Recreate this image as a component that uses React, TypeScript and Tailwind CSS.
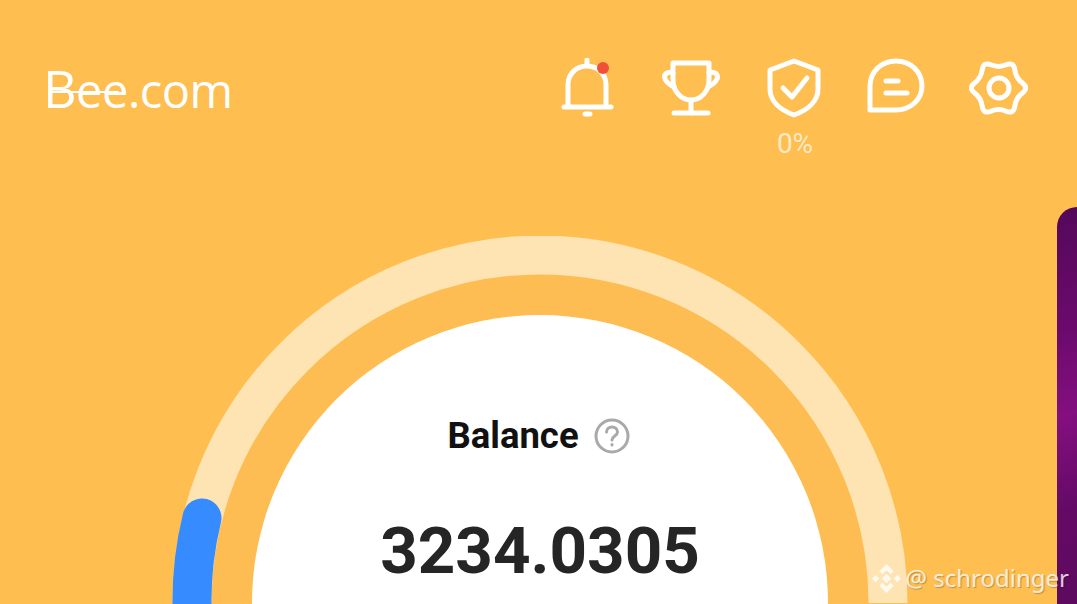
const HeaderIcon = ({ children }: { children: React.ReactNode }) => (
  <svg width="60" height="60" viewBox="0 0 60 60" fill="none" stroke="white" strokeWidth="5" strokeLinecap="round" strokeLinejoin="round">
    {children}
  </svg>
);

// six soft lobes, quadratic spline over alternating outer and inner points
const gearPath = () => {
  const pts = Array.from({ length: 12 }, (_, i) => {
    const r = i % 2 === 0 ? 30.5 : 20;
    const a = (i * Math.PI) / 6;
    return [29.5 + r * Math.cos(a), 30 + r * Math.sin(a)];
  });
  const mid = (a: number[], b: number[]) => `${(a[0] + b[0]) / 2} ${(a[1] + b[1]) / 2}`;
  let d = `M${mid(pts[11], pts[0])}`;
  pts.forEach((p, i) => {
    d += `Q${p[0]} ${p[1]} ${mid(p, pts[(i + 1) % 12])}`;
  });
  return d + 'Z';
};

const BinanceMark = () => (
  <svg width="29" height="29" viewBox="0 0 28 28" fill="currentColor">
    <path d="M14 0l7 7-3 3-4-4-4 4-3-3z" />
    <path d="M14 28l-7-7 3-3 4 4 4-4 3 3z" />
    <path d="M0 14l3.500-3.500L7 14l-3.500 3.500z" />
    <path d="M28 14l-3.500 3.500L21 14l3.500-3.500z" />
    <path d="M14 9.500l4.500 4.500-4.500 4.500L9.500 14z" />
  </svg>
);

export default function App() {
  return (
    <div className="relative flex h-[604px] w-full flex-col overflow-hidden bg-[#ffbe50] font-['Roboto',sans-serif]">
      {/* header */}
      <header className="flex h-[155px] shrink-0 items-start justify-between pl-[43px] pr-[48px] pt-[58px]">
        <div className="relative mt-[2px] font-['Open_Sans',sans-serif] text-[47px] font-normal leading-[56px] tracking-[-0.5px] text-white">
          <span className="text-[52px]">B</span>ee.com
          <span className="absolute left-[6px] top-[31px] h-[2px] w-[70px] bg-white" />
        </div>
        <div className="flex items-start gap-[43px]">
          <div className="relative">
            <HeaderIcon>
              <path d="M30 2v5" />
              <path d="M11 48V27c0-11 8-19 19-19s19 8 19 19v21" />
              <path d="M7 49h47" />
              <path d="M28 56h5" />
            </HeaderIcon>
            <span className="absolute left-[40px] top-[4px] h-[12px] w-[12px] rounded-full bg-[#f0503a]" />
          </div>
          <HeaderIcon>
            <path d="M13 5h36v17c0 11-8 20-18 20s-18-9-18-20z" />
            <path d="M13 15c-5-2-10 1-8 6 2 4 5 6 9 8" />
            <path d="M49 15c5-2 10 1 8 6-2 4-5 6-9 8" />
            <path d="M31 42v13" />
            <path d="M14 55h34" />
          </HeaderIcon>
          <div className="flex flex-col items-center">
            <HeaderIcon>
              <path d="M31 3l24 9v19c0 12-10 21-24 26C17 52 7 43 7 31V12z" />
              <path d="M20 30l9 9 15-19" />
            </HeaderIcon>
            <span className="ml-[4px] mt-[11px] text-[28px] leading-[30px] text-white/70">0%</span>
          </div>
          <HeaderIcon>
            <path d="M4 52V28C4 14 15 3 30 3s26 11 26 25-12 24-26 24z" />
            <path d="M20 23h12" />
            <path d="M20 35h21" />
          </HeaderIcon>
          <HeaderIcon>
            <path d={gearPath()} />
            <circle cx="30" cy="30" r="10" />
          </HeaderIcon>
        </div>
      </header>

      {/* balance gauge + next card */}
      <main className="flex flex-1 items-start pl-[172px]">
        <div className="relative mt-[81px] h-[368px] w-[736px] shrink-0">
          <svg className="absolute inset-0" width="736" height="368" viewBox="0 0 736 368" fill="none">
            <path d="M60 367A308 308 0 0 1 676 367" stroke="#fdbd52" strokeWidth="40" />
            <path d="M20 367A348 348 0 0 1 716 367" stroke="#fee3b3" strokeWidth="39" />
            <path d="M20 370A348 348 0 0 1 30 282" stroke="#368bff" strokeWidth="39" strokeLinecap="round" />
          </svg>
          <div className="relative mx-auto mt-[79px] flex h-[576px] w-[576px] flex-col items-center rounded-full bg-white pt-[99px]">
            <div className="mr-[3px] flex items-center gap-[15px]">
              <span className="text-[36.500px] font-bold leading-[44px] text-[#111111]">Balance</span>
              <svg width="36" height="36" viewBox="0 0 36 36" fill="none" stroke="#a9a9a9" strokeWidth="3" strokeLinecap="round">
                <circle cx="18" cy="18" r="16" />
                <path d="M12.500 14c0-3 2.500-5 5.500-5s5.500 2 5.500 5c0 4-5.500 4-5.500 8" />
                <path d="M18 26.500v.5" />
              </svg>
            </div>
            <div className="mt-[55px] text-[65.500px] font-bold leading-[76px] text-[#252525]">3234.0305</div>
          </div>
        </div>
        <div className="ml-auto mt-[52px] h-[400px] w-[20px] rounded-tl-[26px] bg-[linear-gradient(165deg,#54085a_0%,#6a0a6c_30%,#840f80_52%,#640a66_75%,#5d0a5f_100%)]" />
      </main>

      {/* watermark */}
      <div className="absolute bottom-[11px] right-[8px] flex items-center gap-[4px] font-['Noto_Sans',sans-serif] text-[24px] leading-[30px] text-white/80 [text-shadow:1px_1px_1px_rgba(0,0,0,0.25)]">
        <BinanceMark />
        <span>@ schrodinger</span>
      </div>
    </div>
  );
}
